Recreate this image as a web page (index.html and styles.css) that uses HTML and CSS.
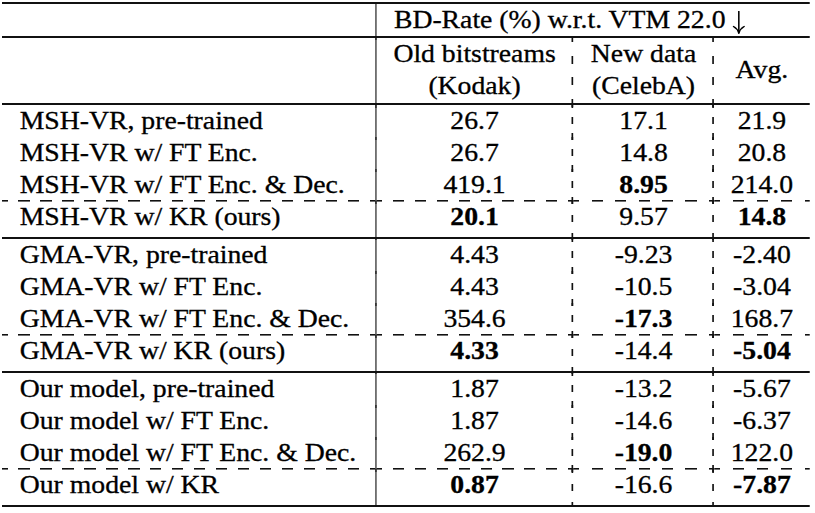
FILE: index.html
```html
<!DOCTYPE html>
<html>
<head>
<meta charset="utf-8">
<link rel="stylesheet" href="styles.css">
</head>
<body>
<div class="tbl">
  <div class="row h1">
    <div class="c c1"></div>
    <div class="c span3"><span>BD-Rate (%) w.r.t. VTM 22.0</span><svg class="arrow" viewBox="0 0 12 23" width="12" height="23" aria-label="down"><path d="M6 0.5 V21.5" /><path d="M1.2 15.5 C3.6 17 5.2 19 6 22 C6.8 19 8.4 17 10.8 15.5" /></svg></div>
  </div>
  <div class="row h2">
    <div class="c c1"></div>
    <div class="c c2">Old bitstreams<br>(Kodak)</div>
    <div class="c c3">New data<br>(CelebA)</div>
    <div class="c c4">Avg.</div>
  </div>

  <div class="row"><div class="c c1">MSH-VR, pre-trained</div><div class="c c2">26.7</div><div class="c c3">17.1</div><div class="c c4">21.9</div></div>
  <div class="row"><div class="c c1">MSH-VR w/ FT Enc.</div><div class="c c2">26.7</div><div class="c c3">14.8</div><div class="c c4">20.8</div></div>
  <div class="row dash"><div class="c c1">MSH-VR w/ FT Enc. &amp; Dec.</div><div class="c c2">419.1</div><div class="c c3 b">8.95</div><div class="c c4">214.0</div></div>
  <div class="row end rule"><div class="c c1">MSH-VR w/ KR (ours)</div><div class="c c2 b">20.1</div><div class="c c3">9.57</div><div class="c c4 b">14.8</div></div>

  <div class="row"><div class="c c1">GMA-VR, pre-trained</div><div class="c c2">4.43</div><div class="c c3">-9.23</div><div class="c c4">-2.40</div></div>
  <div class="row"><div class="c c1">GMA-VR w/ FT Enc.</div><div class="c c2">4.43</div><div class="c c3">-10.5</div><div class="c c4">-3.04</div></div>
  <div class="row dash"><div class="c c1">GMA-VR w/ FT Enc. &amp; Dec.</div><div class="c c2">354.6</div><div class="c c3 b">-17.3</div><div class="c c4">168.7</div></div>
  <div class="row end rule"><div class="c c1">GMA-VR w/ KR (ours)</div><div class="c c2 b">4.33</div><div class="c c3">-14.4</div><div class="c c4 b">-5.04</div></div>

  <div class="row"><div class="c c1">Our model, pre-trained</div><div class="c c2">1.87</div><div class="c c3">-13.2</div><div class="c c4">-5.67</div></div>
  <div class="row"><div class="c c1">Our model w/ FT Enc.</div><div class="c c2">1.87</div><div class="c c3">-14.6</div><div class="c c4">-6.37</div></div>
  <div class="row dash"><div class="c c1">Our model w/ FT Enc. &amp; Dec.</div><div class="c c2">262.9</div><div class="c c3 b">-19.0</div><div class="c c4">122.0</div></div>
  <div class="row end"><div class="c c1">Our model w/ KR</div><div class="c c2 b">0.87</div><div class="c c3">-16.6</div><div class="c c4 b">-7.87</div></div>
</div>
</body>
</html>
```

FILE: styles.css
```css
html, body {
  margin: 0;
  padding: 0;
  background: #fff;
}

.tbl {
  width: 729px;
  margin: 2px 0 0 2px;
  border-top: 2px solid #111;
  border-bottom: 2px solid #111;
  transform: scaleX(1.108);
  transform-origin: 0 0;
  font-family: "Liberation Serif", "Times New Roman", serif;
  font-size: 25px;
  line-height: 32px;
  color: #000;
  -webkit-text-stroke: 0.3px #000;
}

.row {
  display: grid;
  grid-template-columns: 337.5px 178px 127px 86.7px;
  height: 32px;
  /* vertical dash pattern: half dash at each end of the row segment */
  --vp: 16px;
  --vh: 3.5px;
}

.row.h1 {
  height: 32px;
  border-bottom: 2px solid #111;
}

.row.h2 {
  height: 65px;
  border-bottom: 2px solid #111;
  --vp: 21.67px;
  --vh: 4px;
}

.row.end {
  height: 36px;
  --vp: 18px;
}

.row.rule {
  border-bottom: 2px solid #111;
}

.c {
  display: flex;
  align-items: center;
  justify-content: center;
  text-align: center;
  white-space: nowrap;
  padding-bottom: 3px;
  --hp: 19.8px;
}

.h1 .c {
  padding-bottom: 4px;
}

.h2 .c {
  padding-bottom: 6px;
}

.end .c {
  padding-bottom: 7px;
}

.c1 {
  justify-content: flex-start;
  padding-left: 16px;
  border-right: 1.5px solid #111;
  --hp: 19.85px;
}

.c2 { --hp: 19.78px; }
.c3 { --hp: 21.17px; }
.c4 { --hp: 21.67px; }

.span3 {
  grid-column: 2 / 5;
  padding-right: 42px;
  gap: 6px;
}

.arrow {
  flex: none;
  margin-top: 5px;
  fill: none;
  stroke: #000;
  stroke-width: 1.4;
  stroke-linecap: round;
}

.b {
  font-weight: bold;
}

/* vertical dashed column separators */
.c2,
.c3 {
  background-image: repeating-linear-gradient(to bottom,
    #111 0 var(--vh),
    transparent var(--vh) calc(var(--vp) - var(--vh)),
    #111 calc(var(--vp) - var(--vh)) var(--vp));
  background-size: 1.5px 100%;
  background-position: right top;
  background-repeat: no-repeat;
}

/* horizontal dashed rule below the third row of each block */
.dash .c1,
.dash .c4 {
  background-image: repeating-linear-gradient(to right,
    #111 0 5px,
    transparent 5px calc(var(--hp) - 5px),
    #111 calc(var(--hp) - 5px) var(--hp));
  background-size: 100% 1.6px;
  background-position: left 0 bottom 2px;
  background-repeat: no-repeat;
}

.dash .c2,
.dash .c3 {
  background-image:
    repeating-linear-gradient(to bottom,
      #111 0 var(--vh),
      transparent var(--vh) calc(var(--vp) - var(--vh)),
      #111 calc(var(--vp) - var(--vh)) var(--vp)),
    repeating-linear-gradient(to right,
      #111 0 5px,
      transparent 5px calc(var(--hp) - 5px),
      #111 calc(var(--hp) - 5px) var(--hp));
  background-size: 1.5px 100%, 100% 1.6px;
  background-position: right top, left 0 bottom 2px;
  background-repeat: no-repeat, no-repeat;
}
```
